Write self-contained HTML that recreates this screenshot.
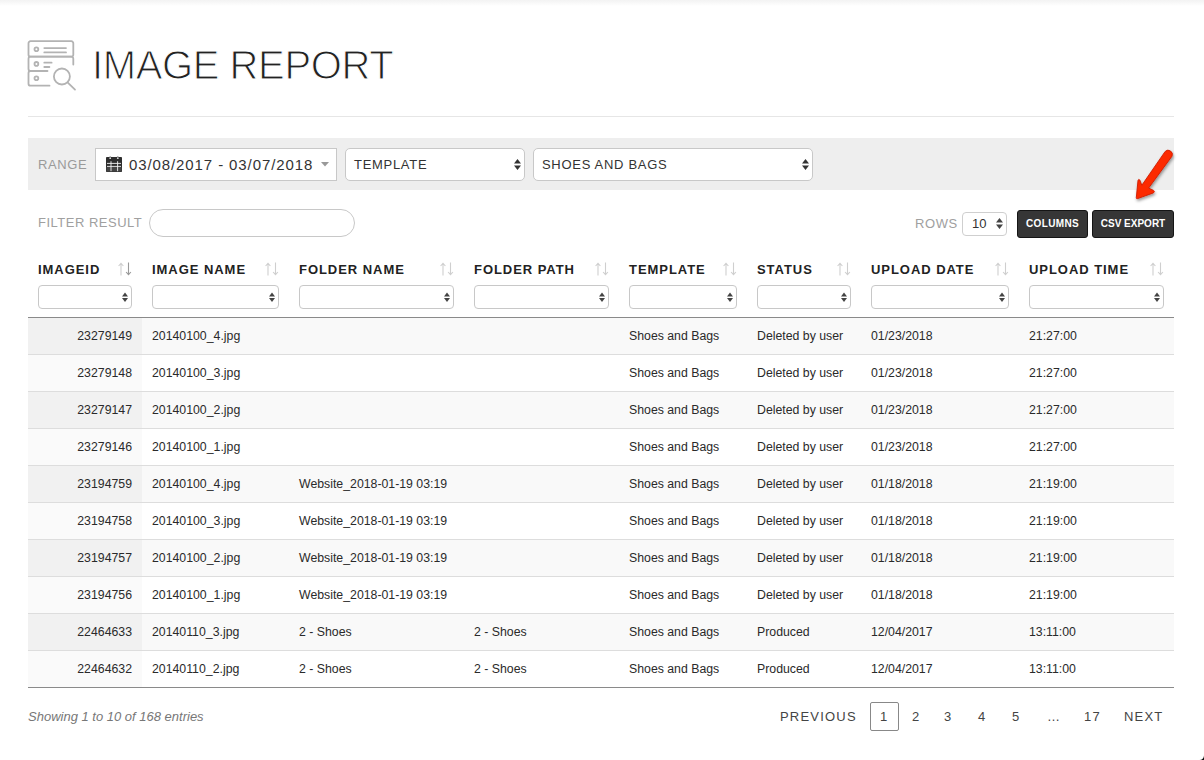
<!DOCTYPE html>
<html><head><meta charset="utf-8">
<style>
*{margin:0;padding:0;box-sizing:border-box}
html,body{width:1204px;height:760px;overflow:hidden;background:#fff}
body{font-family:"Liberation Sans",sans-serif;position:relative;color:#333}
.abs{position:absolute}
.topshade{left:0;top:0;width:1204px;height:6px;background:linear-gradient(#f3f3f3,#f6f6f6 30%,#fff)}
.title{left:92px;top:41px;font-size:40px;line-height:48px;color:#222;letter-spacing:-0.4px;-webkit-text-stroke:1.1px #fff;white-space:nowrap}
.hr{left:28px;top:116px;width:1146px;height:1px;background:#e6e6e6}
.band{left:28px;top:138px;width:1146px;height:52px;background:#eeeeee}
.lbl{font-size:13px;color:#9a9a9a;letter-spacing:0.6px;white-space:nowrap;line-height:16px}
.box{background:#fff;border:1px solid #c8c8c8}
.seltxt{font-size:13px;color:#333;letter-spacing:0.7px;white-space:nowrap;line-height:16px}
.spin{width:7px;height:11px}
.btn{background:#363636;border:1px solid #151515;border-radius:3px;color:#fff;font-weight:bold;font-size:10px;letter-spacing:0.35px;text-align:center;line-height:26px;white-space:nowrap}
.th{font-size:13px;font-weight:bold;color:#222;letter-spacing:0.95px;white-space:nowrap;line-height:16px;top:262px}
.fsel{top:285px;height:24px;border:1px solid #c8c8c8;border-radius:4px;background:#fff}
.row{left:28px;width:1146px;height:37px;border-bottom:1px solid #dddddd}
.cell{position:absolute;top:0;height:36px;line-height:36px;font-size:12.3px;color:#2a2a2a;white-space:nowrap}
.pg{font-size:13px;color:#444;letter-spacing:1.2px;white-space:nowrap;line-height:16px;top:709px}
</style></head><body>
<div class="abs topshade"></div>

<!-- header icon -->
<svg class="abs" style="left:26px;top:39px" width="52" height="54" viewBox="26 39 52 54">
 <g fill="none" stroke="#b3b3b3" stroke-width="1.8" stroke-linecap="round">
  <path d="M30.5 41.2 H71.2 A2 2 0 0 1 73.3 43.3 V54.7 A2 2 0 0 1 71.2 56.7 H30.5 A2 2 0 0 1 28.5 54.7 V43.3 A2 2 0 0 1 30.5 41.2 Z"/>
  <path d="M47.5 71 H30.5 A2 2 0 0 1 28.5 69 V58.7 A2 2 0 0 1 30.5 56.7 H71.2 A2 2 0 0 1 73.3 58.7 V64.5"/>
  <path d="M49.5 85.7 H30.5 A2 2 0 0 1 28.5 83.7 V73 A2 2 0 0 1 30.5 71"/>
  <circle cx="36.4" cy="49.3" r="1.9"/>
  <circle cx="36.4" cy="63.9" r="1.9"/>
  <circle cx="36.4" cy="78.3" r="1.9"/>
  <path d="M44.3 48.1 H66 M44.3 52.4 H66 M44.3 62.7 H51.6 M44.3 67 H49.4"/>
  <circle cx="61.9" cy="76.5" r="8"/>
  <path d="M67.8 82.6 L75 89.6"/>
 </g>
</svg>
<div class="abs title">IMAGE REPORT</div>
<div class="abs hr"></div>

<!-- filter band -->
<div class="abs band"></div>
<div class="abs lbl" style="left:38px;top:157px">RANGE</div>
<div class="abs box" style="left:95px;top:148px;width:242px;height:33px"></div>
<svg class="abs" style="left:106px;top:156px" width="16" height="16" viewBox="0 0 16 16">
 <rect x="0" y="1" width="16" height="15" rx="0.8" fill="#2e2e2e"/>
 <rect x="0.5" y="11" width="15" height="4.5" fill="#444"/>
 <circle cx="4.2" cy="2" r="1.6" fill="#2e2e2e"/><circle cx="11.8" cy="2" r="1.6" fill="#2e2e2e"/>
 <circle cx="4.2" cy="2.2" r="0.9" fill="#d8d8d8"/><circle cx="11.8" cy="2.2" r="0.9" fill="#d8d8d8"/>
 <path d="M1 7.4H15M1 10.4H15M5 5.2V15.2M11.6 5.2V15.2" stroke="#f4f4f4" stroke-width="0.9"/>
</svg>
<div class="abs seltxt" style="left:129px;top:157px;font-size:15px;letter-spacing:0.9px">03/08/2017 - 03/07/2018</div>
<svg class="abs" style="left:321px;top:162px" width="8" height="5" viewBox="0 0 8 5"><path d="M0 0H8L4 4.5Z" fill="#999"/></svg>

<div class="abs box" style="left:345px;top:148px;width:180px;height:33px;border-radius:5px"></div>
<div class="abs seltxt" style="left:354px;top:157px">TEMPLATE</div>
<svg class="abs spin" style="left:514px;top:159px" viewBox="0 0 7 11"><path d="M3.5 0L7 4.5H0Z M0 6.5H7L3.5 11Z" fill="#333"/></svg>

<div class="abs box" style="left:533px;top:148px;width:280px;height:33px;border-radius:5px"></div>
<div class="abs seltxt" style="left:542px;top:157px">SHOES AND BAGS</div>
<svg class="abs spin" style="left:802px;top:159px" viewBox="0 0 7 11"><path d="M3.5 0L7 4.5H0Z M0 6.5H7L3.5 11Z" fill="#333"/></svg>

<!-- second row -->
<div class="abs lbl" style="left:38px;top:215px;color:#a0a0a0;letter-spacing:0.5px">FILTER RESULT</div>
<div class="abs" style="left:149px;top:209px;width:206px;height:28px;border:1px solid #c8c8c8;border-radius:14px;background:#fff"></div>

<div class="abs lbl" style="left:915px;top:216px;color:#a0a0a0">ROWS</div>
<div class="abs" style="left:962px;top:212px;width:45px;height:24px;border:1px solid #cfcfcf;border-radius:4px;background:#fff"></div>
<div class="abs seltxt" style="left:972px;top:216px;font-size:13px;letter-spacing:0">10</div>
<svg class="abs spin" style="left:996px;top:218px" width="6" height="10" viewBox="0 0 7 11"><path d="M3.5 0L7 4.5H0Z M0 6.5H7L3.5 11Z" fill="#444"/></svg>

<div class="abs btn" style="left:1017px;top:210px;width:71px;height:28px">COLUMNS</div>
<div class="abs btn" style="left:1092px;top:210px;width:82px;height:28px;letter-spacing:0px">CSV EXPORT</div>

<!-- red arrow -->
<svg class="abs" style="left:1120px;top:140px" width="70" height="70" viewBox="1120 140 70 70">
 <defs><filter id="sh" x="-30%" y="-30%" width="160%" height="160%"><feDropShadow dx="0.8" dy="2" stdDeviation="1.6" flood-color="#000" flood-opacity="0.4"/></filter></defs>
 <g filter="url(#sh)">
  <path d="M1165.2 151.4 A4.25 4.25 0 0 1 1172 156.2 L1148.6 188.1 L1153.6 190.4 Q1155.3 191.8 1153.4 192.9 L1137.6 198.6 Q1136.2 199 1136.3 197.6 L1138 180.4 Q1138.6 178.6 1139.8 180 L1141.8 185.3 Z" fill="#fc2a04" stroke="#cf1d00" stroke-width="0.9" stroke-linejoin="round"/>
 </g>
</svg>
<svg class="abs" style="left:1192px;top:748px" width="12" height="12" viewBox="1192 748 12 12"><path d="M1204 755.5 A4.5 4.5 0 0 1 1199.5 760 L1204 760 Z" fill="#111"/></svg>
<!-- table header -->
<div class="abs th" style="left:38px">IMAGEID</div>
<svg class="abs" style="left:118px;top:262px" width="14" height="14" viewBox="0 0 14 14"><g fill="none" stroke-width="1.1"><path d="M3 13.5V1.5M0.6 4L3 1.3L5.4 4" stroke="#cfcfcf"/><path d="M10.5 0.5V12.5M8.1 10L10.5 12.7L12.9 10" stroke="#999"/></g></svg>
<div class="abs fsel" style="left:38px;width:94px"></div>
<svg class="abs" style="left:122px;top:292px" width="6" height="10.5" viewBox="0 0 7 11"><path d="M3.5 0L7 4.5H0Z M0 6.5H7L3.5 11Z" fill="#444"/></svg>
<div class="abs th" style="left:152px">IMAGE NAME</div>
<svg class="abs" style="left:265px;top:262px" width="14" height="14" viewBox="0 0 14 14"><g fill="none" stroke-width="1.1"><path d="M3 13.5V1.5M0.6 4L3 1.3L5.4 4" stroke="#cfcfcf"/><path d="M10.5 0.5V12.5M8.1 10L10.5 12.7L12.9 10" stroke="#cfcfcf"/></g></svg>
<div class="abs fsel" style="left:152px;width:127px"></div>
<svg class="abs" style="left:269px;top:292px" width="6" height="10.5" viewBox="0 0 7 11"><path d="M3.5 0L7 4.5H0Z M0 6.5H7L3.5 11Z" fill="#444"/></svg>
<div class="abs th" style="left:299px">FOLDER NAME</div>
<svg class="abs" style="left:440px;top:262px" width="14" height="14" viewBox="0 0 14 14"><g fill="none" stroke-width="1.1"><path d="M3 13.5V1.5M0.6 4L3 1.3L5.4 4" stroke="#cfcfcf"/><path d="M10.5 0.5V12.5M8.1 10L10.5 12.7L12.9 10" stroke="#cfcfcf"/></g></svg>
<div class="abs fsel" style="left:299px;width:155px"></div>
<svg class="abs" style="left:444px;top:292px" width="6" height="10.5" viewBox="0 0 7 11"><path d="M3.5 0L7 4.5H0Z M0 6.5H7L3.5 11Z" fill="#444"/></svg>
<div class="abs th" style="left:474px">FOLDER PATH</div>
<svg class="abs" style="left:595px;top:262px" width="14" height="14" viewBox="0 0 14 14"><g fill="none" stroke-width="1.1"><path d="M3 13.5V1.5M0.6 4L3 1.3L5.4 4" stroke="#cfcfcf"/><path d="M10.5 0.5V12.5M8.1 10L10.5 12.7L12.9 10" stroke="#cfcfcf"/></g></svg>
<div class="abs fsel" style="left:474px;width:135px"></div>
<svg class="abs" style="left:599px;top:292px" width="6" height="10.5" viewBox="0 0 7 11"><path d="M3.5 0L7 4.5H0Z M0 6.5H7L3.5 11Z" fill="#444"/></svg>
<div class="abs th" style="left:629px">TEMPLATE</div>
<svg class="abs" style="left:723px;top:262px" width="14" height="14" viewBox="0 0 14 14"><g fill="none" stroke-width="1.1"><path d="M3 13.5V1.5M0.6 4L3 1.3L5.4 4" stroke="#cfcfcf"/><path d="M10.5 0.5V12.5M8.1 10L10.5 12.7L12.9 10" stroke="#cfcfcf"/></g></svg>
<div class="abs fsel" style="left:629px;width:108px"></div>
<svg class="abs" style="left:727px;top:292px" width="6" height="10.5" viewBox="0 0 7 11"><path d="M3.5 0L7 4.5H0Z M0 6.5H7L3.5 11Z" fill="#444"/></svg>
<div class="abs th" style="left:757px">STATUS</div>
<svg class="abs" style="left:837px;top:262px" width="14" height="14" viewBox="0 0 14 14"><g fill="none" stroke-width="1.1"><path d="M3 13.5V1.5M0.6 4L3 1.3L5.4 4" stroke="#cfcfcf"/><path d="M10.5 0.5V12.5M8.1 10L10.5 12.7L12.9 10" stroke="#cfcfcf"/></g></svg>
<div class="abs fsel" style="left:757px;width:94px"></div>
<svg class="abs" style="left:841px;top:292px" width="6" height="10.5" viewBox="0 0 7 11"><path d="M3.5 0L7 4.5H0Z M0 6.5H7L3.5 11Z" fill="#444"/></svg>
<div class="abs th" style="left:871px">UPLOAD DATE</div>
<svg class="abs" style="left:995px;top:262px" width="14" height="14" viewBox="0 0 14 14"><g fill="none" stroke-width="1.1"><path d="M3 13.5V1.5M0.6 4L3 1.3L5.4 4" stroke="#cfcfcf"/><path d="M10.5 0.5V12.5M8.1 10L10.5 12.7L12.9 10" stroke="#cfcfcf"/></g></svg>
<div class="abs fsel" style="left:871px;width:138px"></div>
<svg class="abs" style="left:999px;top:292px" width="6" height="10.5" viewBox="0 0 7 11"><path d="M3.5 0L7 4.5H0Z M0 6.5H7L3.5 11Z" fill="#444"/></svg>
<div class="abs th" style="left:1029px">UPLOAD TIME</div>
<svg class="abs" style="left:1150px;top:262px" width="14" height="14" viewBox="0 0 14 14"><g fill="none" stroke-width="1.1"><path d="M3 13.5V1.5M0.6 4L3 1.3L5.4 4" stroke="#cfcfcf"/><path d="M10.5 0.5V12.5M8.1 10L10.5 12.7L12.9 10" stroke="#cfcfcf"/></g></svg>
<div class="abs fsel" style="left:1029px;width:135px"></div>
<svg class="abs" style="left:1154px;top:292px" width="6" height="10.5" viewBox="0 0 7 11"><path d="M3.5 0L7 4.5H0Z M0 6.5H7L3.5 11Z" fill="#444"/></svg>
<div class="abs" style="left:28px;top:317px;width:1146px;height:1px;background:#8a8a8a"></div>
<div class="abs row" style="top:318px;background:#f9f9f9;">
<div class="cell" style="left:0;width:114px;background:#f1f1f1;text-align:right;padding-right:10px">23279149</div>
<div class="cell" style="left:124px">20140100_4.jpg</div>
<div class="cell" style="left:601px">Shoes and Bags</div>
<div class="cell" style="left:729px">Deleted by user</div>
<div class="cell" style="left:843px">01/23/2018</div>
<div class="cell" style="left:1001px">21:27:00</div>
</div>
<div class="abs row" style="top:355px;background:#ffffff;">
<div class="cell" style="left:0;width:114px;background:#fafafa;text-align:right;padding-right:10px">23279148</div>
<div class="cell" style="left:124px">20140100_3.jpg</div>
<div class="cell" style="left:601px">Shoes and Bags</div>
<div class="cell" style="left:729px">Deleted by user</div>
<div class="cell" style="left:843px">01/23/2018</div>
<div class="cell" style="left:1001px">21:27:00</div>
</div>
<div class="abs row" style="top:392px;background:#f9f9f9;">
<div class="cell" style="left:0;width:114px;background:#f1f1f1;text-align:right;padding-right:10px">23279147</div>
<div class="cell" style="left:124px">20140100_2.jpg</div>
<div class="cell" style="left:601px">Shoes and Bags</div>
<div class="cell" style="left:729px">Deleted by user</div>
<div class="cell" style="left:843px">01/23/2018</div>
<div class="cell" style="left:1001px">21:27:00</div>
</div>
<div class="abs row" style="top:429px;background:#ffffff;">
<div class="cell" style="left:0;width:114px;background:#fafafa;text-align:right;padding-right:10px">23279146</div>
<div class="cell" style="left:124px">20140100_1.jpg</div>
<div class="cell" style="left:601px">Shoes and Bags</div>
<div class="cell" style="left:729px">Deleted by user</div>
<div class="cell" style="left:843px">01/23/2018</div>
<div class="cell" style="left:1001px">21:27:00</div>
</div>
<div class="abs row" style="top:466px;background:#f9f9f9;">
<div class="cell" style="left:0;width:114px;background:#f1f1f1;text-align:right;padding-right:10px">23194759</div>
<div class="cell" style="left:124px">20140100_4.jpg</div>
<div class="cell" style="left:271px">Website_2018-01-19 03:19</div>
<div class="cell" style="left:601px">Shoes and Bags</div>
<div class="cell" style="left:729px">Deleted by user</div>
<div class="cell" style="left:843px">01/18/2018</div>
<div class="cell" style="left:1001px">21:19:00</div>
</div>
<div class="abs row" style="top:503px;background:#ffffff;">
<div class="cell" style="left:0;width:114px;background:#fafafa;text-align:right;padding-right:10px">23194758</div>
<div class="cell" style="left:124px">20140100_3.jpg</div>
<div class="cell" style="left:271px">Website_2018-01-19 03:19</div>
<div class="cell" style="left:601px">Shoes and Bags</div>
<div class="cell" style="left:729px">Deleted by user</div>
<div class="cell" style="left:843px">01/18/2018</div>
<div class="cell" style="left:1001px">21:19:00</div>
</div>
<div class="abs row" style="top:540px;background:#f9f9f9;">
<div class="cell" style="left:0;width:114px;background:#f1f1f1;text-align:right;padding-right:10px">23194757</div>
<div class="cell" style="left:124px">20140100_2.jpg</div>
<div class="cell" style="left:271px">Website_2018-01-19 03:19</div>
<div class="cell" style="left:601px">Shoes and Bags</div>
<div class="cell" style="left:729px">Deleted by user</div>
<div class="cell" style="left:843px">01/18/2018</div>
<div class="cell" style="left:1001px">21:19:00</div>
</div>
<div class="abs row" style="top:577px;background:#ffffff;">
<div class="cell" style="left:0;width:114px;background:#fafafa;text-align:right;padding-right:10px">23194756</div>
<div class="cell" style="left:124px">20140100_1.jpg</div>
<div class="cell" style="left:271px">Website_2018-01-19 03:19</div>
<div class="cell" style="left:601px">Shoes and Bags</div>
<div class="cell" style="left:729px">Deleted by user</div>
<div class="cell" style="left:843px">01/18/2018</div>
<div class="cell" style="left:1001px">21:19:00</div>
</div>
<div class="abs row" style="top:614px;background:#f9f9f9;">
<div class="cell" style="left:0;width:114px;background:#f1f1f1;text-align:right;padding-right:10px">22464633</div>
<div class="cell" style="left:124px">20140110_3.jpg</div>
<div class="cell" style="left:271px">2 - Shoes</div>
<div class="cell" style="left:446px">2 - Shoes</div>
<div class="cell" style="left:601px">Shoes and Bags</div>
<div class="cell" style="left:729px">Produced</div>
<div class="cell" style="left:843px">12/04/2017</div>
<div class="cell" style="left:1001px">13:11:00</div>
</div>
<div class="abs row" style="top:651px;background:#ffffff;border-bottom:1px solid #8a8a8a">
<div class="cell" style="left:0;width:114px;background:#fafafa;text-align:right;padding-right:10px">22464632</div>
<div class="cell" style="left:124px">20140110_2.jpg</div>
<div class="cell" style="left:271px">2 - Shoes</div>
<div class="cell" style="left:446px">2 - Shoes</div>
<div class="cell" style="left:601px">Shoes and Bags</div>
<div class="cell" style="left:729px">Produced</div>
<div class="cell" style="left:843px">12/04/2017</div>
<div class="cell" style="left:1001px">13:11:00</div>
</div>
<div class="abs" style="left:28px;top:709px;font-size:13px;font-style:italic;color:#777;white-space:nowrap;line-height:16px">Showing 1 to 10 of 168 entries</div>
<div class="abs pg" style="left:780px">PREVIOUS</div>
<div class="abs" style="left:870px;top:702px;width:29px;height:29px;border:1px solid #888;border-radius:2px"></div>
<div class="abs pg" style="left:880px">1</div>
<div class="abs pg" style="left:912px">2</div>
<div class="abs pg" style="left:944px">3</div>
<div class="abs pg" style="left:978px">4</div>
<div class="abs pg" style="left:1012px">5</div>
<div class="abs pg" style="left:1047px">…</div>
<div class="abs pg" style="left:1084px">17</div>
<div class="abs pg" style="left:1124px">NEXT</div>
</body></html>
